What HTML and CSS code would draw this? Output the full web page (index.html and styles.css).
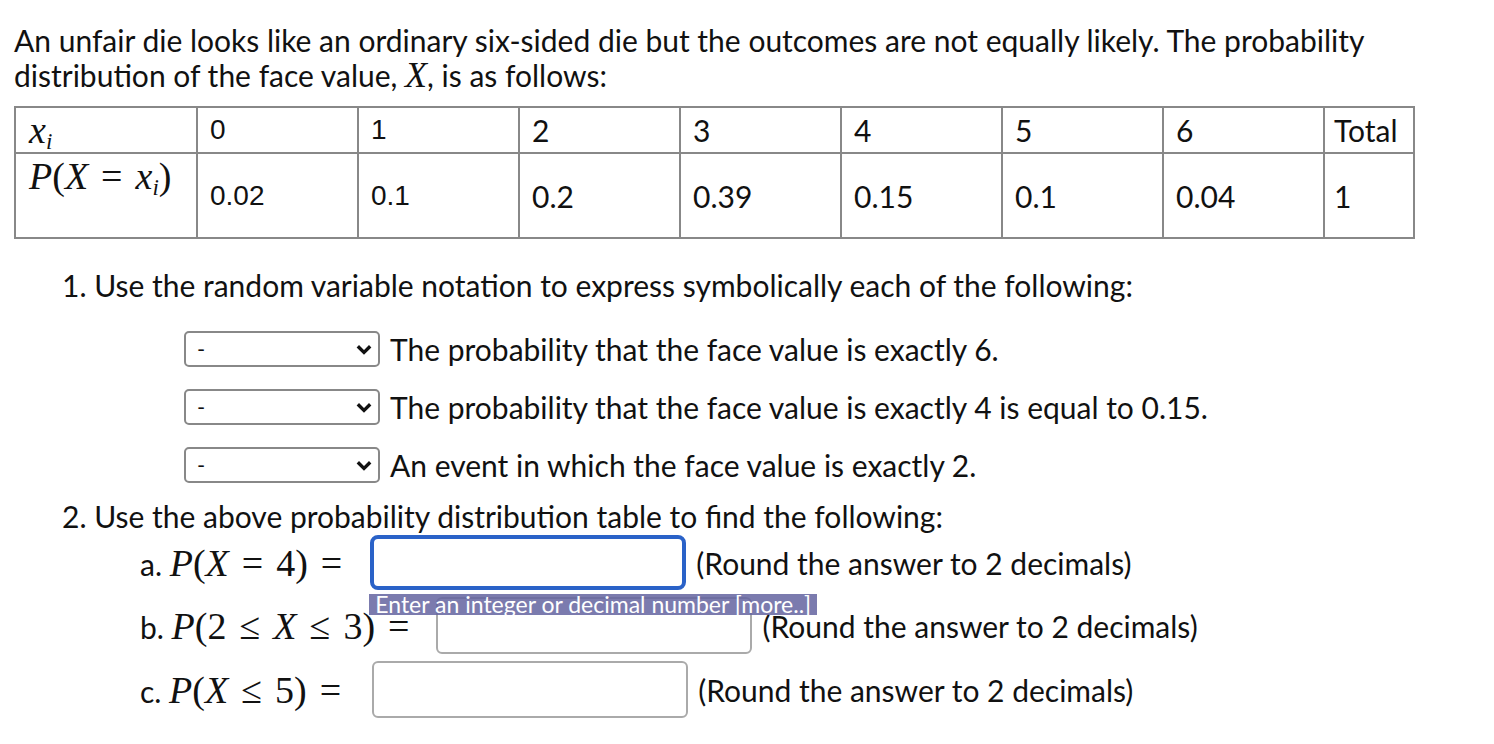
FILE: index.html
```html
<!DOCTYPE html>
<html>
<head>
<meta charset="utf-8">
<link rel="stylesheet" href="styles.css">
</head>
<body>
<div class="page">
  <p class="intro">An unfair die looks like an ordinary six-sided die but the outcomes are not equally likely. The probability distribution of the face value, <span class="m">X</span>, is as follows:</p>
  <table class="dist">
    <colgroup><col class="c-head"><col class="c-val"><col class="c-val"><col class="c-val"><col class="c-val"><col class="c-val"><col class="c-val"><col class="c-val"><col class="c-tot"></colgroup>
    <tr class="r1">
      <td class="head"><span class="m">x<sub>i</sub></span></td>
      <td class="alt">0</td><td class="alt">1</td><td>2</td><td>3</td><td>4</td><td>5</td><td>6</td><td class="tot">Total</td>
    </tr>
    <tr class="r2">
      <td class="head top"><span class="m">P</span><span class="mr">(</span><span class="m">X</span><span class="mr op">=</span><span class="m">x<sub>i</sub></span><span class="mr">)</span></td>
      <td class="alt">0.02</td><td class="alt">0.1</td><td>0.2</td><td>0.39</td><td>0.15</td><td>0.1</td><td>0.04</td><td class="tot">1</td>
    </tr>
  </table>

  <div class="q1">1. Use the random variable notation to express symbolically each of the following:</div>
  <div class="sel-list">
    <div class="sel-row"><span class="sel"><span>-</span><svg viewBox="0 0 16 16" width="18" height="18"><path d="M2.5 5.5l5.5 5.5 5.5-5.5" fill="none" stroke="#111" stroke-width="3"/></svg></span><span>The probability that the face value is exactly 6.</span></div>
    <div class="sel-row"><span class="sel"><span>-</span><svg viewBox="0 0 16 16" width="18" height="18"><path d="M2.5 5.5l5.5 5.5 5.5-5.5" fill="none" stroke="#111" stroke-width="3"/></svg></span><span>The probability that the face value is exactly 4 is equal to 0.15.</span></div>
    <div class="sel-row"><span class="sel"><span>-</span><svg viewBox="0 0 16 16" width="18" height="18"><path d="M2.5 5.5l5.5 5.5 5.5-5.5" fill="none" stroke="#111" stroke-width="3"/></svg></span><span>An event in which the face value is exactly 2.</span></div>
  </div>

  <div class="q2">2. Use the above probability distribution table to find the following:</div>
  <div class="ans-list">
    <div class="ans-row ra">
      <span class="lbl">a. <span class="m">P</span><span class="mr">(</span><span class="m">X</span><span class="mr op">=</span><span class="mr">4)</span><span class="mr op">=</span></span>
      <span class="box focus"><span class="tip">Enter an integer or decimal number [more..]</span></span>
      <span class="note">(Round the answer to 2 decimals)</span>
    </div>
    <div class="ans-row rb">
      <span class="lbl">b. <span class="m">P</span><span class="mr">(2</span><span class="mr op">≤</span><span class="m">X</span><span class="mr op">≤</span><span class="mr">3)</span><span class="mr op">=</span></span>
      <span class="box"></span>
      <span class="note">(Round the answer to 2 decimals)</span>
    </div>
    <div class="ans-row rc">
      <span class="lbl">c. <span class="m">P</span><span class="mr">(</span><span class="m">X</span><span class="mr op">≤</span><span class="mr">5)</span><span class="mr op">=</span></span>
      <span class="box"></span>
      <span class="note">(Round the answer to 2 decimals)</span>
    </div>
  </div>
</div>
</body>
</html>
```

FILE: styles.css
```css
html, body {
  margin: 0;
  padding: 0;
  background: #fff;
}
body {
  font-family: Lato, "Open Sans", sans-serif;
  font-size: 30px;
  color: #111;
}
.page {
  padding: 24px 0 0 14px;
}
.intro {
  margin: 0;
  width: 1399px;
  line-height: 33px;
}
.m {
  font-family: "Liberation Serif", serif;
  font-style: italic;
  font-size: 38px;
  line-height: 1;
}
.mr {
  font-family: "Liberation Serif", serif;
  font-size: 38px;
  line-height: 1;
}
.intro .m {
  font-size: 36px;
}
.op {
  margin: 0 13px;
}
.m sub {
  font-size: 23px;
  vertical-align: -6px;
  line-height: 0;
}
.dist {
  margin-top: 13px;
  border-collapse: collapse;
  border: 2px solid #333;
  width: 1399px;
  table-layout: fixed;
}
.c-head { width: 182px; }
.c-val { width: 161px; }
.c-tot { width: 90px; }
.dist td {
  border: 2px solid #888;
  padding: 0 0 0 12px;
  vertical-align: middle;
  line-height: 1;
}
.dist td.head {
  padding-left: 13px;
}
.dist td.tot {
  padding-left: 9px;
}
.dist td.alt {
  font-family: "Liberation Sans", Arial, sans-serif;
  font-size: 28px;
}
.r1 td {
  height: 44px;
}
.r2 td {
  height: 80px;
}
.dist td.top {
  vertical-align: top;
  padding-top: 3px;
}
.q1 {
  margin: 28px 0 0 48px;
}
.sel-list {
  display: flex;
  flex-direction: column;
  gap: 22px;
  margin: 28px 0 0 170px;
}
.sel-row {
  display: flex;
  align-items: center;
  gap: 10px;
  line-height: 1;
}
.sel {
  box-sizing: border-box;
  width: 196px;
  height: 36px;
  border: 2px solid #888;
  border-radius: 5px;
  display: flex;
  align-items: center;
  justify-content: space-between;
  padding: 0 5px 0 11px;
  font-size: 22px;
}
.q2 {
  margin: 15px 0 0 48px;
}
.ans-list {
  margin: 1px 0 0 126px;
  display: flex;
  flex-direction: column;
  gap: 7px;
}
.ans-row {
  display: flex;
  align-items: center;
}
.lbl {
  white-space: nowrap;
}
.box {
  position: relative;
  box-sizing: border-box;
  width: 316px;
  height: 57px;
  border: 2px solid #aaa;
  border-radius: 6px;
  margin: 0 10px 0 14px;
}
.box.focus {
  border: 4px solid #2a62c8;
  border-radius: 8px;
  height: 55px;
}
.ra .box { margin-left: 15px; }
.rc .box { margin-left: 18px; }
.tip {
  position: absolute;
  left: -5px;
  top: 55px;
  background: rgba(100, 100, 160, 0.85);
  color: #fff;
  font-size: 23px;
  line-height: 21px;
  padding: 0 6px;
  white-space: nowrap;
  z-index: 2;
}
```
